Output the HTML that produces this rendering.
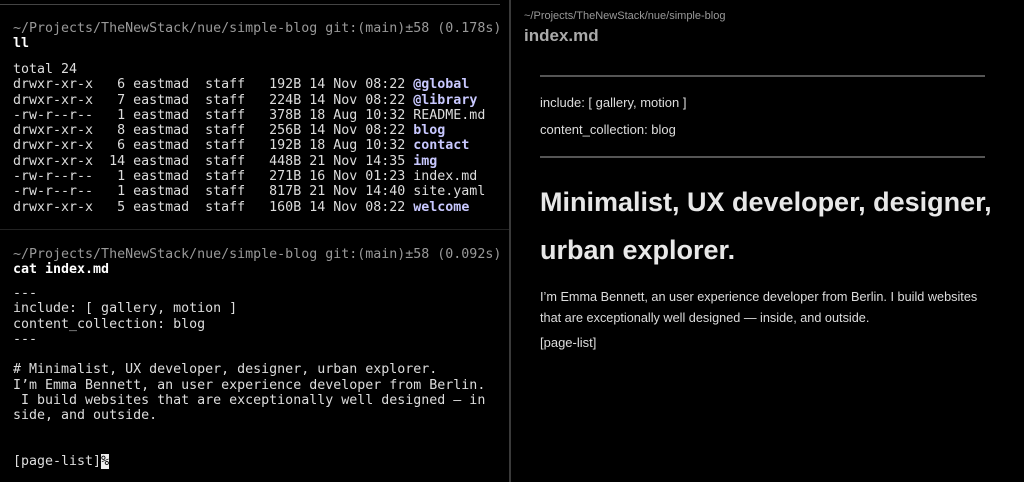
<!DOCTYPE html>
<html><head><meta charset="utf-8"><style>
body{margin:0;width:1024px;height:482px;background:#000;overflow:hidden;position:relative;font-family:"Liberation Mono",monospace}
.t{position:absolute;left:13px;font-size:13.3px;line-height:15.3px;color:#ddd;white-space:pre;margin:0}
.g{color:#999}
.b{font-weight:bold;color:#fff}
.d{font-weight:bold;color:#c8c8ff}
.hl{position:absolute;background:#333}
.r{position:absolute;font-family:"Liberation Sans",sans-serif;white-space:nowrap}
</style></head><body>
<div class="hl" style="left:0;top:4px;width:500px;height:1px;background:#444"></div>
<div class="hl" style="left:0;top:229px;width:509px;height:1px;background:#222"></div>
<div class="hl" style="left:509px;top:0;width:2px;height:482px;background:#3a3a3a"></div>
<pre class="t" style="top:21px"><span class="g">~/Projects/TheNewStack/nue/simple-blog git:(main)±58 (0.178s)</span>
<span class="b">ll</span></pre>
<pre class="t" style="top:62px">total 24
drwxr-xr-x   6 eastmad  staff   192B 14 Nov 08:22 <span class="d">@global</span>
drwxr-xr-x   7 eastmad  staff   224B 14 Nov 08:22 <span class="d">@library</span>
-rw-r--r--   1 eastmad  staff   378B 18 Aug 10:32 README.md
drwxr-xr-x   8 eastmad  staff   256B 14 Nov 08:22 <span class="d">blog</span>
drwxr-xr-x   6 eastmad  staff   192B 18 Aug 10:32 <span class="d">contact</span>
drwxr-xr-x  14 eastmad  staff   448B 21 Nov 14:35 <span class="d">img</span>
-rw-r--r--   1 eastmad  staff   271B 16 Nov 01:23 index.md
-rw-r--r--   1 eastmad  staff   817B 21 Nov 14:40 site.yaml
drwxr-xr-x   5 eastmad  staff   160B 14 Nov 08:22 <span class="d">welcome</span></pre>
<pre class="t" style="top:247px"><span class="g">~/Projects/TheNewStack/nue/simple-blog git:(main)±58 (0.092s)</span>
<span class="b">cat index.md</span></pre>
<pre class="t" style="top:286px">---
include: [ gallery, motion ]
content_collection: blog
---

# Minimalist, UX developer, designer, urban explorer.
I’m Emma Bennett, an user experience developer from Berlin.
 I build websites that are exceptionally well designed — in
side, and outside.


[page-list]<span style="background:#eee;color:#000">%</span></pre>

<div class="r" style="left:524px;top:10px;font-size:11px;color:#999">~/Projects/TheNewStack/nue/simple-blog</div>
<div class="r" style="left:524px;top:26px;font-size:17px;font-weight:bold;color:#aaa">index.md</div>
<div class="hl" style="left:540px;top:75px;width:445px;height:2px;background:#555"></div>
<div class="r" style="left:540px;top:95px;font-size:13px;color:#ddd">include: [ gallery, motion ]</div>
<div class="r" style="left:540px;top:122px;font-size:13px;color:#ddd">content_collection: blog</div>
<div class="hl" style="left:540px;top:156px;width:445px;height:2px;background:#555"></div>
<div class="r" style="left:540px;top:178px;font-size:27px;line-height:48px;font-weight:bold;color:#e8e8e8">Minimalist, UX developer, designer,<br>urban explorer.</div>
<div class="r" style="left:540px;top:287px;font-size:12.7px;line-height:21px;color:#ddd">I’m Emma Bennett, an user experience developer from Berlin. I build websites<br>that are exceptionally well designed — inside, and outside.</div>
<div class="r" style="left:540px;top:335px;font-size:13px;color:#ddd">[page-list]</div>
</body></html>
